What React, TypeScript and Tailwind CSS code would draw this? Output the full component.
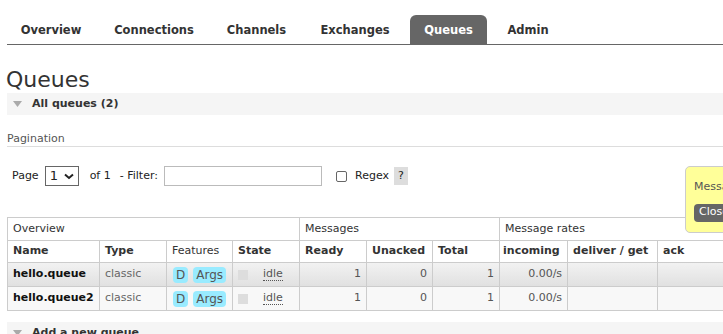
const TABS = [
  { label: 'Overview', w: 'w-[88px]' },
  { label: 'Connections', w: 'w-[106px]' },
  { label: 'Channels', w: 'w-[87px]' },
  { label: 'Exchanges', w: 'w-[98px]' },
  { label: 'Queues', w: 'w-[77px]', active: true },
  { label: 'Admin', w: 'w-[70px]' },
];

const QUEUES = [
  { name: 'hello.queue', ready: 1, unacked: 0, total: 1, incoming: '0.00/s' },
  { name: 'hello.queue2', ready: 1, unacked: 0, total: 1, incoming: '0.00/s' },
];

function Triangle() {
  return (
    <svg width="9" height="6" viewBox="0 0 9 6" className="shrink-0">
      <path d="M0 0 L9 0 L4.5 6 Z" fill="#aaaaaa" />
    </svg>
  );
}

function SectionHeader({ title }: { title: string }) {
  return (
    <div className="ml-[7px] h-[22px] bg-[#f5f5f5] flex items-center gap-[10px] pl-[6px]">
      <Triangle />
      <span className="font-bold text-[#333]">{title}</span>
    </div>
  );
}

export default function App() {
  return (
    <div className="relative w-[723px] h-[334px] overflow-hidden bg-white text-[11px] text-[#333] font-['DejaVu_Sans',Verdana,sans-serif]">
      {/* Nav tabs */}
      <div className="ml-[7px] mt-[15px] flex gap-[6px] border-b border-[#666]">
        {TABS.map((t) => (
          <div
            key={t.label}
            className={`${t.w} h-[29px] pt-[3px] flex items-center justify-center rounded-t-[6px] font-bold text-[11.5px] ${
              t.active ? 'bg-[#666] text-white' : 'text-[#333]'
            }`}
          >
            {t.label}
          </div>
        ))}
      </div>

      {/* Title */}
      <h1 className="ml-[6px] mt-[22px] text-[22px] leading-[26px] text-[#333]">Queues</h1>

      <SectionHeader title="All queues (2)" />

      {/* Pagination */}
      <div className="ml-[7px] mt-[17px] leading-[14px] border-b border-[#ddd] text-[#555]">Pagination</div>

      <div className="mt-[19px] ml-[12px] flex items-center h-[20px] text-[#222]">
        <span>Page</span>
        <div className="ml-[6px] w-[34px] h-[20px] border border-[#666] flex items-center justify-between px-[4px]">
          <span className="text-[13px]">1</span>
          <svg width="10" height="7" viewBox="0 0 10 7">
            <path d="M1 1.5 L5 5 L9 1.5" stroke="#222" strokeWidth="2" fill="none" />
          </svg>
        </div>
        <span className="ml-[11px]">of 1</span>
        <span className="ml-[9px]">- Filter:</span>
        <div className="ml-[6px] w-[158px] h-[20px] border border-[#bbb]" />
        <div className="ml-[14px] w-[11px] h-[11px] border border-[#666] rounded-[2px]" />
        <span className="ml-[8px]">Regex</span>
        <span className="ml-[5px] px-[4px] h-[18px] flex items-center bg-[#ddd]">?</span>
      </div>

      {/* Table */}
      <div className="mt-[31px] ml-[7px]">
        <table className="table-fixed border-collapse w-[740px] text-[#333]">
          <colgroup>
            <col className="w-[92px]" />
            <col className="w-[67px]" />
            <col className="w-[66px]" />
            <col className="w-[67px]" />
            <col className="w-[67px]" />
            <col className="w-[66px]" />
            <col className="w-[67px]" />
            <col className="w-[68px]" />
            <col className="w-[90px]" />
            <col className="w-[90px]" />
          </colgroup>
          <thead>
            <tr className="h-[23px]">
              <th colSpan={4} className="border border-[#ccc] text-left font-normal px-[5px]">Overview</th>
              <th colSpan={3} className="border border-[#ccc] text-left font-normal px-[5px]">Messages</th>
              <th colSpan={3} className="border border-[#ccc] text-left font-normal px-[5px]">Message rates</th>
            </tr>
            <tr className="h-[22px]">
              <th className="border border-[#ccc] text-left font-bold px-[5px]">Name</th>
              <th className="border border-[#ccc] text-left font-bold px-[5px]">Type</th>
              <th className="border border-[#ccc] text-left font-normal px-[5px]">Features</th>
              <th className="border border-[#ccc] text-left font-bold px-[5px]">State</th>
              <th className="border border-[#ccc] text-left font-bold px-[5px]">Ready</th>
              <th className="border border-[#ccc] text-left font-bold px-[5px]">Unacked</th>
              <th className="border border-[#ccc] text-left font-bold px-[5px]">Total</th>
              <th className="border border-[#ccc] text-left font-bold px-[3px]">incoming</th>
              <th className="border border-[#ccc] text-left font-bold px-[5px]">deliver / get</th>
              <th className="border border-[#ccc] text-left font-bold px-[5px]">ack</th>
            </tr>
          </thead>
          <tbody>
            {QUEUES.map((q, i) => (
              <tr
                key={q.name}
                className={`h-[24px] ${i === 0 ? 'bg-linear-to-b from-[#f2f2f2] to-[#e0e0e0]' : 'bg-[#f8f8f8]'}`}
              >
                <td className="border border-[#ccc] px-[5px] font-bold text-[#111]">{q.name}</td>
                <td className="border border-[#ccc] px-[5px] text-[#666]">classic</td>
                <td className="border border-[#ccc] px-[6px]">
                  <div className="flex gap-[5px] text-[#555] text-[12px]">
                    <span className="px-[3px] rounded-[4px] bg-[#99ebff] leading-[16px]">D</span>
                    <span className="px-[3px] rounded-[4px] bg-[#99ebff] leading-[16px]">Args</span>
                  </div>
                </td>
                <td className="border border-[#ccc] px-[5px]">
                  <div className="flex items-center">
                    <span className="w-[10px] h-[10px] bg-[#ddd]" />
                    <span className="ml-[15px] text-[#555] border-b border-dotted border-[#555] leading-[12px]">idle</span>
                  </div>
                </td>
                <td className="border border-[#ccc] px-[5px] text-right text-[#555]">{q.ready}</td>
                <td className="border border-[#ccc] px-[5px] text-right text-[#555]">{q.unacked}</td>
                <td className="border border-[#ccc] px-[5px] text-right text-[#555]">{q.total}</td>
                <td className="border border-[#ccc] px-[5px] text-right text-[#555]">{q.incoming}</td>
                <td className="border border-[#ccc] px-[5px]" />
                <td className="border border-[#ccc] px-[5px]" />
              </tr>
            ))}
          </tbody>
        </table>
      </div>

      <div className="mt-[11px]">
        <SectionHeader title="Add a new queue" />
      </div>

      {/* Status popup on the right */}
      <div className="absolute left-[685px] top-[166px] w-[200px] h-[67px] rounded-[5px] border border-[#ccc] bg-[#ffff99] px-[8px] pt-[12px]">
        <div className="text-[#555]">Message of the day</div>
        <div className="mt-[8px] inline-flex h-[18px] items-center rounded-[4px] bg-[#666] px-[5px] text-white">Close</div>
      </div>
    </div>
  );
}
